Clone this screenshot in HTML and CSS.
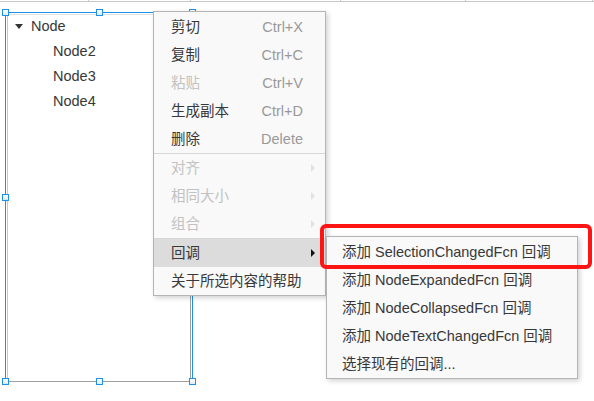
FILE: index.html
```html
<!DOCTYPE html>
<html>
<head>
<meta charset="UTF-8">
<title>Tree context menu</title>
<link rel="stylesheet" href="styles.css">
</head>
<body>
<div class="canvas">
  <div class="ruler">
    <span class="tick" style="left:88px"></span>
    <span class="tick" style="left:190px"></span>
    <span class="tick" style="left:340px"></span>
    <span class="tick" style="left:465px"></span>
    <span class="tick" style="left:592px"></span>
  </div>

  <!-- selected tree component -->
  <div class="tree">
    <div class="tree-inner">
      <div class="node root"><span class="caret"></span>Node</div>
      <div class="node child">Node2</div>
      <div class="node child">Node3</div>
      <div class="node child">Node4</div>
    </div>
    <span class="handle h-tl"></span>
    <span class="handle h-tc"></span>
    <span class="handle h-tr"></span>
    <span class="handle h-ml"></span>
    <span class="handle h-mr"></span>
    <span class="handle h-bl"></span>
    <span class="handle h-bc"></span>
    <span class="handle h-br"></span>
  </div>

  <div class="menu main">
    <div class="item"><span>剪切</span><span class="key">Ctrl+X</span></div>
    <div class="item"><span>复制</span><span class="key">Ctrl+C</span></div>
    <div class="item off"><span>粘贴</span><span class="key">Ctrl+V</span></div>
    <div class="item"><span>生成副本</span><span class="key">Ctrl+D</span></div>
    <div class="item"><span>删除</span><span class="key">Delete</span></div>
    <div class="sep"></div>
    <div class="item off"><span>对齐</span><span class="arrow"></span></div>
    <div class="item off"><span>相同大小</span><span class="arrow"></span></div>
    <div class="item off"><span>组合</span><span class="arrow"></span></div>
    <div class="sep"></div>
    <div class="item active"><span>回调</span><span class="arrow"></span></div>
    <div class="item"><span>关于所选内容的帮助</span></div>
  </div>

  <div class="menu sub">
    <div class="item">添加 SelectionChangedFcn 回调</div>
    <div class="item">添加 NodeExpandedFcn 回调</div>
    <div class="item">添加 NodeCollapsedFcn 回调</div>
    <div class="item">添加 NodeTextChangedFcn 回调</div>
    <div class="item">选择现有的回调...</div>
  </div>

  <div class="callout"></div>
</div>
</body>
</html>
```

FILE: styles.css
```css
body {
  margin: 0;
  background: #fff;
  font-family: "Liberation Sans", "Noto Sans CJK SC", sans-serif;
  font-size: 14.5px;
  color: #383838;
}

.canvas { position: relative; width: 594px; height: 401px; overflow: hidden; }

/* top ruler */
.ruler { height: 1px; border-bottom: 1px solid #c9c9c9; }
.tick { position: absolute; top: 0; width: 1px; height: 2px; background: #c9c9c9; }

/* tree component */
.tree {
  position: absolute;
  left: 5px; top: 12px;
  width: 186px; height: 368px;
  border: 1px solid #1e90e8;
}
.tree-inner {
  height: 100%;
  box-sizing: border-box;
  margin: 1px;
  border: 1px solid #a0a0a0;
  border-top-color: #e0e0e0;
  border-left-color: #c8c8c8;
}
.node { height: 25px; line-height: 25px; }
.root { margin-top: -1px; padding-left: 7px; display: flex; align-items: center; }
.child { padding-left: 45px; }
.caret {
  width: 0; height: 0;
  border-left: 4px solid transparent;
  border-right: 4px solid transparent;
  border-top: 5px solid #333;
  margin-right: 8px;
}

.handle {
  position: absolute;
  width: 5px; height: 5px;
  border: 1px solid #1e90e8;
  background: linear-gradient(#ffffff, #dcebf8);
}
.h-tl { left: -4px; top: -4px; }
.h-tc { left: 90px; top: -4px; }
.h-tr { right: -4px; top: -4px; }
.h-ml { left: -4px; top: 181px; }
.h-mr { right: -4px; top: 181px; }
.h-bl { left: -4px; bottom: -4px; }
.h-bc { left: 90px; bottom: -4px; }
.h-br { right: -4px; bottom: -4px; }

/* context menus */
.menu {
  position: absolute;
  background: #f9f9f9;
  border: 1px solid #b4b4b4;
  box-shadow: 2px 2px 5px rgba(0, 0, 0, 0.18);
}
.menu .item { height: 28px; line-height: 28px; white-space: nowrap; }

.main { left: 153px; top: 11px; width: 171px; padding: 1px 0 0; }
.main .item { display: flex; justify-content: space-between; align-items: center; padding: 0 22px 0 17px; }
.main .key { color: #999; }
.main .off { color: #c2c2c2; }
.main .active { background: #dcdcdc; }
.sep { height: 1px; background: #d6d6d6; }

.arrow {
  width: 0; height: 0;
  border-top: 4px solid transparent;
  border-bottom: 4px solid transparent;
  border-left: 4px solid #111;
  margin-right: -12px;
}
.off .arrow { border-left-color: #e2e2e2; }

.sub { left: 326px; top: 236px; width: 250px; padding: 1px 0 0; }
.sub .item { padding-left: 15px; }

/* highlight box drawn over the screenshot */
.callout {
  position: absolute;
  left: 320px; top: 224px;
  width: 264px; height: 37px;
  border: 4px solid #ff1414;
  border-radius: 6px;
}
```
